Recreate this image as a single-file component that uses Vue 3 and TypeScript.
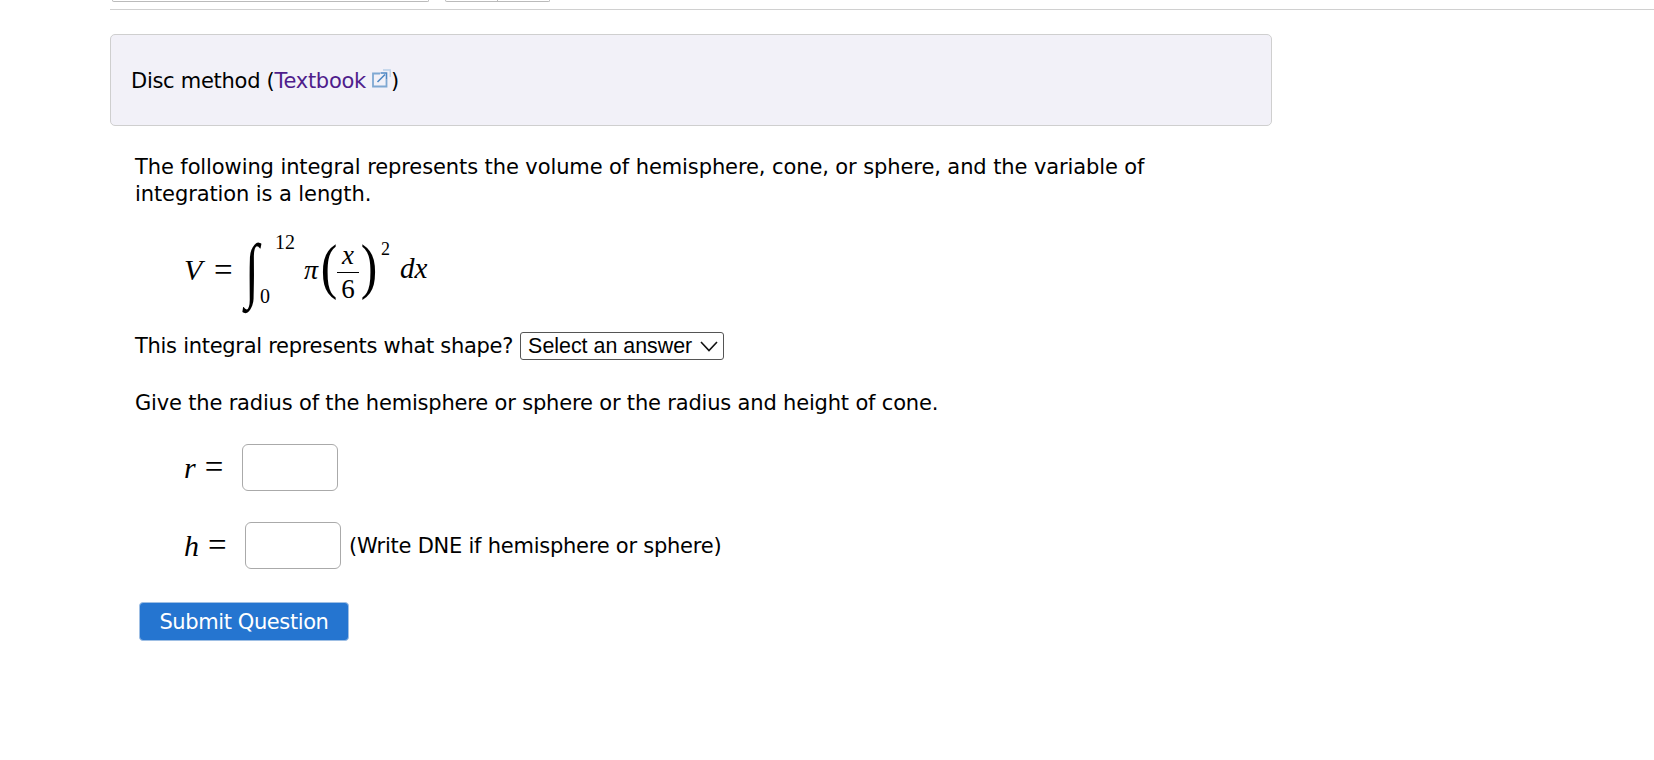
<script setup lang="ts">
const heading = 'Disc method'
</script>

<template>
  <div class="page">
    <div class="topbar">
      <div class="top-input"></div>
      <div class="top-group"><span></span><span></span></div>
    </div>
    <main class="content">
      <div class="intro">
        {{ heading }} (<a class="link">Textbook</a>
        <svg class="ext" viewBox="0 0 19 19" width="19" height="19" fill="none">
          <path d="M8 4.5H1V17.5H14.5V10" stroke="#7fa8d2" stroke-width="1.8" />
          <path d="M5.5 13L13 5.5M8.5 4H14.5V10" stroke="#4f88c4" stroke-width="1.6" />
          <path d="M11 1H18.2V8" stroke="#b9d0e8" stroke-width="1.3" />
        </svg>)
      </div>
      <section class="question">
        <p class="para first">The following integral represents the volume of hemisphere, cone, or sphere, and the variable of<br />integration is a length.</p>
        <div class="formula">
          <i class="var">V</i><span class="eq">=</span>
          <span class="integral">∫</span>
          <span class="limits"><span class="upper">12</span><span class="lower">0</span></span>
          <i class="pi">π</i>
          <span class="paren">(</span>
          <span class="frac"><i>x</i><span>6</span></span>
          <span class="paren close">)</span>
          <span class="pow">2</span>
          <i class="dx">dx</i>
        </div>
        <div class="select-row">
          <span>This integral represents what shape?</span>
          <span class="select-wrap">
            <select class="select"><option>Select an answer</option></select>
            <svg class="chev" viewBox="0 0 18 11" width="18" height="11" fill="none"><path d="M1 1L9 9.5L17 1" stroke="#111" stroke-width="1.6" /></svg>
          </span>
        </div>
        <p class="para give">Give the radius of the hemisphere or sphere or the radius and height of cone.</p>
        <div class="answer r-row"><i class="var small">r</i><span class="eq">=</span><input class="box" type="text" /></div>
        <div class="answer h-row"><i class="var small">h</i><span class="eq">=</span><input class="box" type="text" /><span class="note">(Write DNE if hemisphere or sphere)</span></div>
        <button class="submit" type="button">Submit Question</button>
      </section>
    </main>
  </div>
</template>

<style>
html, body { margin: 0; background: #fff; }
</style>

<style scoped>
.page { width: 1654px; height: 760px; overflow: hidden; font-family: "DejaVu Sans", sans-serif; color: #000; font-size: 21px; }
.topbar { height: 9px; margin-left: 110px; border-bottom: 1px solid #d0d0d0; display: flex; gap: 16px; }
.top-input { width: 315px; height: 1px; margin-left: 2px; border: 1px solid #bbb; border-top: 0; border-radius: 0 0 5px 5px; }
.top-group { display: flex; width: 103px; height: 1px; border: 1px solid #bbb; border-top: 0; border-radius: 0 0 5px 5px; }
.top-group span { flex: 1; }
.top-group span + span { border-left: 1px solid #bbb; }
.content { width: 1162px; margin-left: 110px; padding-top: 24px; }
.intro { box-sizing: border-box; height: 92px; padding: 2px 0 0 20px; display: flex; align-items: center; white-space: pre-wrap; letter-spacing: -.28px; background: #f2f1f8; border: 1px solid #cfcfcf; border-radius: 5px; }
.link { color: #4f1d8c; }
.ext { margin: -6px 0 0 6px; }
.question { padding: 28px 0 0 25px; }
.para { margin: 0; line-height: 27px; width: 1060px; }
.first { letter-spacing: -.1px; }
.formula { display: flex; align-items: center; height: 90px; margin: 17px 0 0 49px; font-family: "Liberation Serif", serif; }
.var { font-family: "Liberation Serif", serif; font-size: 30px; width: 30px; }
.eq { font-family: "Liberation Serif", serif; font-size: 33px; width: 20px; }
.integral { font-family: "Liberation Serif", serif; font-size: 72px; line-height: 1; width: 10px; margin-left: 13px; display: flex; justify-content: center; transform: scaleX(.7); }
.limits { display: flex; flex-direction: column; justify-content: space-between; height: 76px; margin-top: -2px; width: 47px; font-size: 20px; line-height: 22px; }
.upper { margin-left: 18px; }
.lower { margin-left: 3px; }
.pi { font-size: 28px; width: 17px; }
.paren { font-size: 62px; line-height: 1; width: 16px; display: flex; justify-content: center; transform: scaleX(.8) translateY(-4px); }
.close { margin-left: 2px; }
.frac { display: flex; flex-direction: column; align-items: center; font-size: 27px; line-height: 33px; width: 22px; transform: translateY(2px); }
.frac i { border-bottom: 1.5px solid #000; width: 100%; text-align: center; }
.pow { font-size: 18px; align-self: flex-start; margin: 14px 0 0 4px; width: 11px; }
.dx { font-size: 29px; margin: -3px 0 0 8px; }
.select-row { display: flex; align-items: center; gap: 7px; height: 28px; margin-top: 17px; }
.select-row > span:first-child { letter-spacing: -.29px; }
.select-wrap { position: relative; display: inline-flex; }
.select { appearance: none; box-sizing: border-box; width: 204px; height: 28px; padding: 0 0 0 7px; background: #fff; border: 1px solid #555; border-radius: 3px; font: 21.4px "Liberation Sans", sans-serif; color: #000; }
.chev { position: absolute; right: 6px; top: 9px; pointer-events: none; }
.give { margin-top: 30px; letter-spacing: -.18px; }
.answer { display: flex; align-items: center; height: 47px; margin-left: 49px; }
.r-row { margin-top: 27px; }
.h-row { margin-top: 31px; }
.small { width: auto; }
.box { box-sizing: border-box; width: 96px; height: 47px; border: 1px solid #aaa; border-radius: 6px; background: #fff; padding: 0; }
.small + .eq { margin-left: 9px; margin-right: 17px; }
.note { margin-left: 8px; letter-spacing: -.24px; }
.submit { display: block; box-sizing: border-box; width: 210px; height: 39px; margin: 33px 0 0 4px; padding: 0; background: #2575d0; color: #fff; border: 1px solid #9fbfe4; border-radius: 4px; font: 21px "DejaVu Sans", sans-serif; letter-spacing: -.4px; }
</style>
